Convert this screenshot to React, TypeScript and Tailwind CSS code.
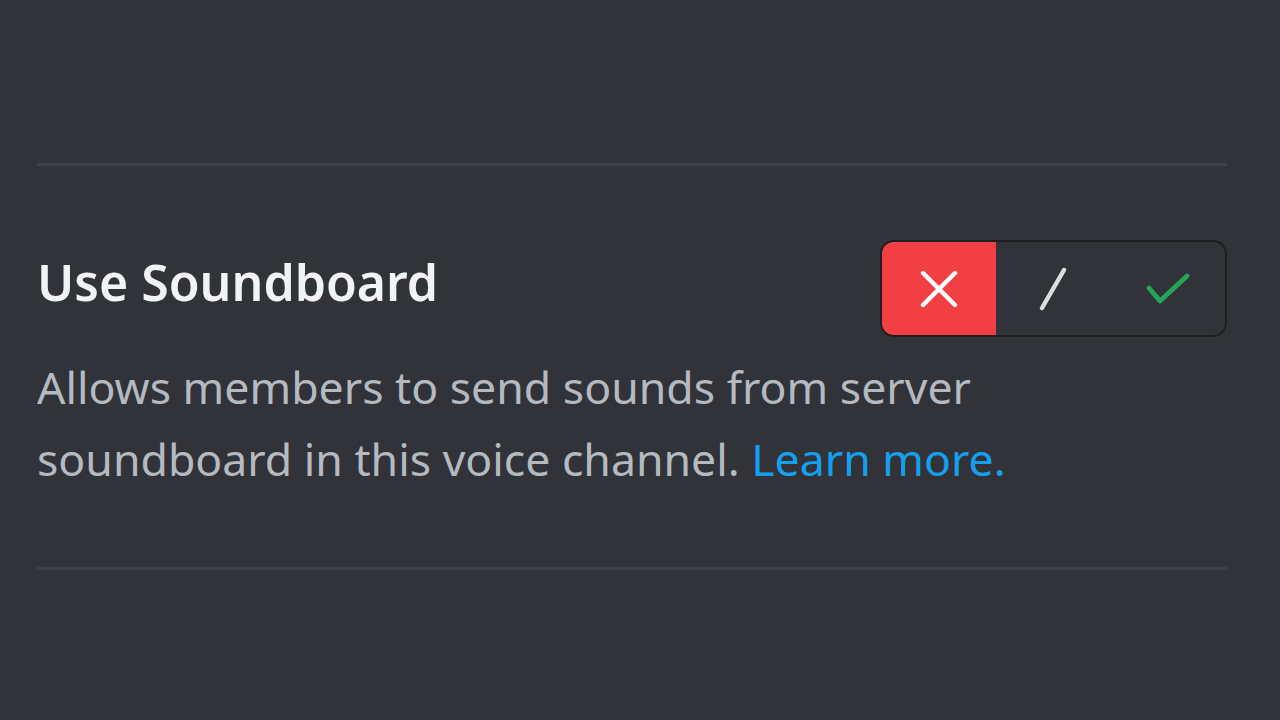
export default function App() {
  return (
    <div className="min-h-screen w-full bg-[#313338] pl-[37px] pr-[53px] pt-[163px]" style={{ fontFamily: '"Noto Sans", "Open Sans", sans-serif' }}>
      <div className="h-[3px] w-full bg-[#3f4147]" />
      <div className="pt-[74px]">
        <div className="flex items-center justify-between">
          <h2 className="mt-[-14px] text-[50px] font-semibold leading-[70px] text-[#f2f3f5]">Use Soundboard</h2>
          <div className="flex h-[97px] w-[347px] overflow-hidden rounded-[14px] border-2 border-[#1e1f22]">
            <div className="flex flex-1 items-center justify-center bg-[#f23f43]">
              <svg width="38" height="38" viewBox="0 0 38 38" fill="none" stroke="#ffffff" strokeWidth="4.4" strokeLinecap="round">
                <path d="M3 3 L35 35 M35 3 L3 35" />
              </svg>
            </div>
            <div className="flex flex-1 items-center justify-center">
              <svg width="30" height="44" viewBox="0 0 30 44" fill="none" stroke="#dbdee1" strokeWidth="4.4" strokeLinecap="round">
                <path d="M26 3 L4 41" />
              </svg>
            </div>
            <div className="flex flex-1 items-center justify-center">
              <svg width="44" height="32" viewBox="0 0 44 32" fill="none" stroke="#23a55a" strokeWidth="4.8" strokeLinecap="round" strokeLinejoin="round">
                <path d="M3 15 L14 28 L41 3" />
              </svg>
            </div>
          </div>
        </div>
        <p className="mt-[14px] w-[980px] text-[44.6px] leading-[72px] text-[#b5bac1]">
          Allows members to send sounds from server soundboard in this voice channel.{' '}
          <span className="text-[#14a0f0]">Learn more.</span>
        </p>
      </div>
      <div className="mt-[72px] h-[3px] w-full bg-[#3f4147]" />
    </div>
  );
}
